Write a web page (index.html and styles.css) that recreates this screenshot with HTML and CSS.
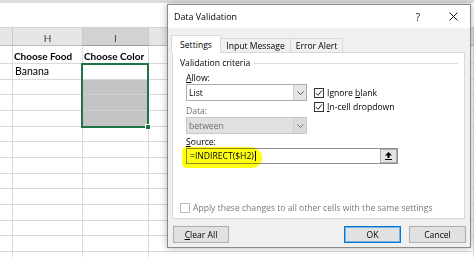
FILE: index.html
```html
<!DOCTYPE html>
<html>
<head>
<meta charset="utf-8">
<title>Data Validation</title>
<link rel="stylesheet" href="styles.css">
</head>
<body>
<div class="sheet">
  <div class="topstrip"></div>
  <div class="fbar"></div>
  <div class="grid">
    <div class="ch"></div><div class="ch">H</div><div class="ch sel">I</div><div class="ch"></div>
    <div class="c"></div><div class="c b">Choose Food</div><div class="c b">Choose Color</div><div class="c"></div>
    <div class="c"></div><div class="c">Banana</div><div class="c"></div><div class="c"></div>
    <div class="c"></div><div class="c"></div><div class="c hl"></div><div class="c"></div>
    <div class="c"></div><div class="c"></div><div class="c hl"></div><div class="c"></div>
    <div class="c"></div><div class="c"></div><div class="c hl"></div><div class="c"></div>
    <div class="c"></div><div class="c"></div><div class="c"></div><div class="c"></div>
    <div class="c"></div><div class="c"></div><div class="c"></div><div class="c"></div>
    <div class="c"></div><div class="c"></div><div class="c"></div><div class="c"></div>
    <div class="c"></div><div class="c"></div><div class="c"></div><div class="c"></div>
    <div class="c"></div><div class="c"></div><div class="c"></div><div class="c"></div>
    <div class="c"></div><div class="c"></div><div class="c"></div><div class="c"></div>
    <div class="c"></div><div class="c"></div><div class="c"></div><div class="c"></div>
    <div class="c"></div><div class="c"></div><div class="c"></div><div class="c"></div>
    <div class="c"></div><div class="c"></div><div class="c"></div><div class="c"></div>
  </div>
  <div class="selection"><span class="handle"></span></div>
</div>

<div class="dialog">
  <div class="titlebar">
    <span class="title">Data Validation</span>
    <span class="help">?</span>
    <svg class="close" width="9" height="9" viewBox="0 0 9 9"><path d="M0.5 0.5L8.5 8.5M8.5 0.5L0.5 8.5" stroke="#111" stroke-width="1" fill="none"/></svg>
  </div>
  <div class="body">
    <div class="tabs">
      <div class="tab active">Settings</div>
      <div class="tab w1">Input Message</div>
      <div class="tab w2">Error Alert</div>
    </div>
    <div class="panel">
      <div class="group"><span>Validation criteria</span><span class="rule"></span></div>
      <div class="criteria">
        <div class="fields">
          <div class="lbl"><u>A</u>llow:</div>
          <div class="combo">
            <span class="val">List</span>
            <span class="dd"><svg width="7" height="4" viewBox="0 0 7 4"><path d="M0.5 0.5L3.5 3.5L6.5 0.5" stroke="#555" fill="none"/></svg></span>
          </div>
          <div class="lbl dim">Data:</div>
          <div class="combo disabled">
            <span class="val">between</span>
            <span class="dd"><svg width="7" height="4" viewBox="0 0 7 4"><path d="M0.5 0.5L3.5 3.5L6.5 0.5" stroke="#777" fill="none"/></svg></span>
          </div>
        </div>
        <div class="checks">
          <div class="check"><span class="box"><svg width="8" height="8" viewBox="0 0 8 8"><path d="M1 4.2L3 6.3L7 1.4" stroke="#222" stroke-width="1" fill="none"/></svg></span><span>Ignore <u>b</u>lank</span></div>
          <div class="check"><span class="box"><svg width="8" height="8" viewBox="0 0 8 8"><path d="M1 4.2L3 6.3L7 1.4" stroke="#222" stroke-width="1" fill="none"/></svg></span><span><u>I</u>n-cell dropdown</span></div>
        </div>
      </div>
      <div class="lbl src"><u>S</u>ource:</div>
      <div class="source">
        <span class="text">=INDIRECT($H2)</span><span class="caret"></span>
        <span class="ref"><svg width="7" height="8" viewBox="0 0 7 8"><path d="M3.5 0L7 3.6H4.5V6H2.5V3.6H0Z" fill="#000"/><rect x="0" y="7" width="7" height="1" fill="#000"/></svg></span>
        <span class="highlight"></span>
      </div>
      <div class="apply"><span class="box off"></span><span>Apply these changes to all other cells with the same settings</span></div>
    </div>
    <div class="buttons">
      <button class="btn clear"><u>C</u>lear All</button>
      <span class="grow"></span>
      <button class="btn ok">OK</button>
      <button class="btn">Cancel</button>
    </div>
  </div>
</div>
</body>
</html>
```
FILE: styles.css
```css
* { box-sizing: border-box; }
html, body {
  margin: 0;
  width: 474px;
  height: 257px;
  overflow: hidden;
  background: #fff;
}
body { position: relative; }

/* ---------- spreadsheet ---------- */
.sheet {
  font-family: Lato, "Liberation Sans", sans-serif;
  color: #000;
}
.topstrip { height: 3px; background: #dcdcdc; }
.fbar { height: 25px; background: #fff; border-bottom: 1px solid #d4d4d4; }
.grid {
  display: grid;
  grid-template-columns: 13px 70px 66px 1fr;
  grid-template-rows: 18px 18px repeat(13, 15.67px);
}
.ch {
  background: #e6e6e6;
  border-right: 1px solid #c9c9c9;
  border-bottom: 1px solid #b9b9b9;
  display: flex;
  align-items: flex-end;
  justify-content: center;
  padding-bottom: 2px;
  font-size: 10px;
  line-height: 1;
  color: #444;
}
.ch.sel { background: #d2d2d2; border-bottom-color: #9a9a9a; }
.c {
  border-right: 1px solid #dadada;
  border-bottom: 1px solid #dadada;
  display: flex;
  align-items: flex-end;
  padding: 0 0 2px 2px;
  font-size: 10.5px;
  line-height: 1;
  white-space: nowrap;
  overflow: hidden;
}
.c.b { font-weight: bold; font-size: 10px; padding-left: 1px; }
.c.hl { background: #c4c4c4; border-bottom-color: #d0d0d0; }

.selection {
  position: absolute;
  left: 81px;
  top: 63px;
  width: 68px;
  height: 65px;
  border: 2px solid #217346;
}
.handle {
  position: absolute;
  right: -4px;
  bottom: -4px;
  width: 6px;
  height: 6px;
  background: #217346;
  border: 1px solid #fff;
}

/* ---------- dialog ---------- */
.dialog {
  position: absolute;
  left: 167px;
  top: 4px;
  width: 304px;
  height: 244px;
  border: 1px solid #8a8a8a;
  background: #f0f0f0;
  box-shadow: 0 0 7px rgba(0, 0, 0, 0.3);
  font-family: "Open Sans", "Noto Sans", sans-serif;
  font-size: 8.6px;
  color: #000;
  display: flex;
  flex-direction: column;
}
.titlebar {
  height: 23px;
  background: #fff;
  display: flex;
  align-items: center;
  padding-left: 6px;
}
.title { flex: 1; font-size: 8.9px; }
.help { width: 8px; text-align: center; font-size: 10px; margin-right: 27px; color: #111; }
.close { margin-right: 12px; }

.body { flex: 1; padding: 7px 5px 0 4px; }

.tabs {
  display: flex;
  align-items: flex-end;
  height: 17px;
  margin-left: -1px;
}
.tab {
  height: 14px;
  border: 1px solid #d9d9d9;
  border-bottom: none;
  background: #f0f0f0;
  display: flex;
  align-items: center;
  justify-content: center;
  margin-left: -1px;
  white-space: nowrap;
}
.tab.active {
  width: 50px;
  height: 18px;
  margin-left: 0;
  margin-bottom: -1px;
  background: #fff;
  position: relative;
  z-index: 1;
}
.tab.w1 { width: 71px; }
.tab.w2 { width: 53px; }

.panel {
  height: 167px;
  background: #fff;
  border: 1px solid #d9d9d9;
  padding: 4px 6px 0 7px;
}
.group { display: flex; align-items: center; height: 12px; white-space: nowrap; }
.group .rule { flex: 1; height: 1px; background: #dcdcdc; margin-left: 4px; }

.criteria { display: flex; margin: 3px 0 0 6px; }
.fields { width: 121px; }
.lbl { height: 12px; line-height: 12px; }
.lbl.dim { color: #6d6d6d; margin-top: 4px; }
.lbl.src { margin: 2px 0 0 6px; }

.combo {
  height: 17px;
  border: 1px solid #adadad;
  background: #fff;
  display: flex;
  align-items: center;
}
.combo .val { flex: 1; padding-left: 2px; }
.combo .dd {
  width: 13px;
  height: 100%;
  background: #e5e5e5;
  border-left: 1px solid #cfcfcf;
  display: flex;
  align-items: center;
  justify-content: center;
}
.combo.disabled { background: #e0e0e0; border-color: #c8c8c8; color: #6d6d6d; }
.combo.disabled .dd { background: #dadada; }

.checks { margin-left: 7px; padding-top: 14px; }
.check { height: 14px; display: flex; align-items: center; white-space: nowrap; }
.box {
  width: 10px;
  height: 10px;
  border: 1px solid #333;
  background: #fff;
  margin-right: 3px;
  display: flex;
  align-items: center;
  justify-content: center;
  flex: none;
}
.box.off { border-color: #bcbcbc; }

.source {
  position: relative;
  margin-left: 6px;
  width: 212px;
  height: 16px;
  border: 1px solid #8f8f8f;
  background: #fff;
  display: flex;
  align-items: center;
}
.source .text { padding-left: 3px; white-space: nowrap; }
.caret { width: 1px; height: 10px; background: #000; margin-left: 1px; }
.ref {
  margin-left: auto;
  width: 17px;
  height: 14px;
  background: #e5e5e5;
  border: 1px solid #adadad;
  display: flex;
  align-items: center;
  justify-content: center;
}
.highlight {
  position: absolute;
  left: -5px;
  top: -2px;
  width: 80px;
  height: 21px;
  background: #ffff14;
  mix-blend-mode: multiply;
  border-radius: 5px 12px 10px 4px / 4px 10px 9px 5px;
}

.apply {
  display: flex;
  align-items: center;
  height: 12px;
  margin-top: 38px;
  color: #7a7a7a;
  white-space: nowrap;
}

.buttons {
  display: flex;
  gap: 8px;
  margin: 7px -1px 0 0;
  padding-left: 1px;
}
.grow { flex: 1; }
.btn {
  height: 17px;
  width: 57px;
  padding: 0;
  border: 1px solid #adadad;
  background: #e1e1e1;
  font: inherit;
  color: #000;
}
.btn.clear { width: 56px; }
.btn.ok { border-color: #0078d7; box-shadow: inset 0 0 0 1px rgba(0, 120, 215, 0.45); }
```
